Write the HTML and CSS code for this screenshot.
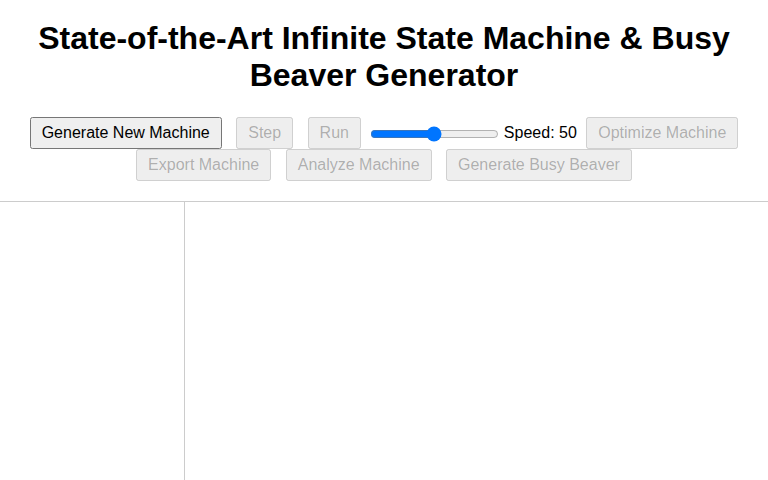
FILE: index.html
```html
<!DOCTYPE html>
<html lang="en">
<head>
<meta charset="utf-8">
<title>Infinite State Machine &amp; Busy Beaver Generator</title>
<link rel="stylesheet" href="styles.css">
</head>
<body>
<header class="header">
  <h1 class="title">State-of-the-Art Infinite State Machine &amp; Busy Beaver Generator</h1>
  <div class="controls">
    <button class="btn">Generate New Machine</button>
    <button class="btn" disabled>Step</button>
    <button class="btn" disabled>Run</button>
    <input class="speed" type="range" min="1" max="100" value="50">
    <span class="speed-label">Speed: 50</span>
    <button class="btn" disabled>Optimize Machine</button>
    <button class="btn" disabled>Export Machine</button>
    <button class="btn" disabled>Analyze Machine</button>
    <button class="btn" disabled>Generate Busy Beaver</button>
  </div>
</header>
<main class="main">
  <aside class="sidebar"></aside>
  <section class="canvas"></section>
</main>
</body>
</html>
```

FILE: styles.css
```css
html, body {
  margin: 0;
  padding: 0;
  height: 100%;
  background: #fff;
  font-family: "Liberation Sans", Arial, sans-serif;
  color: #000;
}

body {
  display: flex;
  flex-direction: column;
}

.header {
  padding: 20px;
  border-bottom: 1px solid #ccc;
  text-align: center;
}

.title {
  margin: 0 0 23px;
  font-size: 32px;
  font-weight: bold;
}

.controls {
  font-size: 16px;
}

.btn {
  font-family: "Liberation Sans", Arial, sans-serif;
  font-size: 16px;
  padding: 5px 10px;
  margin: 0 5px;
}

.speed {
  margin: 2px 0;
  vertical-align: middle;
}

.main {
  flex: 1;
  display: flex;
}

.sidebar {
  width: 185px;
  box-sizing: border-box;
  border-right: 1px solid #ccc;
}

.canvas {
  flex: 1;
}
```
